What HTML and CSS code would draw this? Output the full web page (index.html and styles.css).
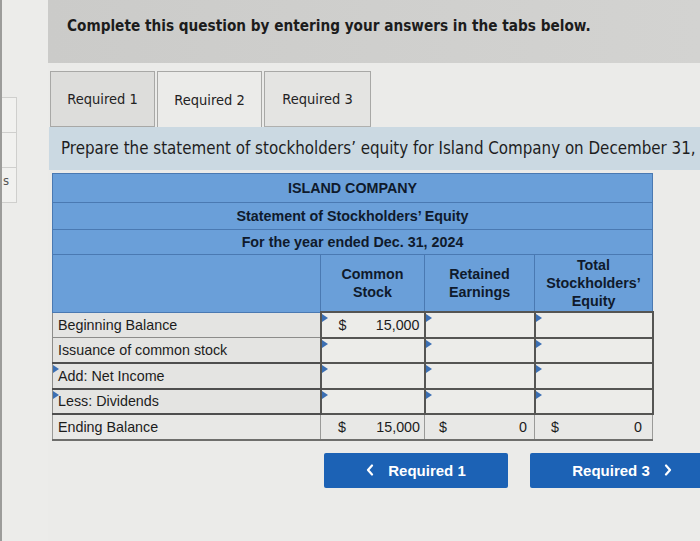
FILE: index.html
```html
<!DOCTYPE html>
<html lang="en">
<head>
<meta charset="utf-8">
<title>Statement of Stockholders' Equity</title>
<link rel="stylesheet" href="styles.css">
</head>
<body>
<div class="page">
  <aside class="side">
    <div class="side-box"></div>
    <div class="side-box"></div>
    <div class="side-box"><span class="side-text">s</span></div>
  </aside>
  <main class="main">
    <div class="banner">Complete this question by entering your answers in the tabs below.</div>
    <div class="tabs">
      <div class="tab tab-1">Required 1</div>
      <div class="tab tab-2 active">Required 2</div>
      <div class="tab tab-3">Required 3</div>
    </div>
    <div class="prompt">Prepare the statement of stockholders’ equity for Island Company on December 31, 2024.</div>
    <table class="sheet">
      <colgroup>
        <col class="c-label">
        <col class="c-cs">
        <col class="c-re">
        <col class="c-tot">
      </colgroup>
      <tr class="title t1"><td colspan="4">ISLAND COMPANY</td></tr>
      <tr class="title t2"><td colspan="4">Statement of Stockholders’ Equity</td></tr>
      <tr class="title t3"><td colspan="4">For the year ended Dec. 31, 2024</td></tr>
      <tr class="heads">
        <td></td>
        <td>Common<br>Stock</td>
        <td>Retained<br>Earnings</td>
        <td>Total<br>Stockholders’<br>Equity</td>
      </tr>
      <tr class="row">
        <td class="label">Beginning Balance</td>
        <td class="input flag"><div class="money"><span class="cur cur-cs">$</span><span class="amt">15,000</span></div></td>
        <td class="input flag"></td>
        <td class="input flag"></td>
      </tr>
      <tr class="row">
        <td class="label">Issuance of common stock</td>
        <td class="input flag"></td>
        <td class="input flag"></td>
        <td class="input flag"></td>
      </tr>
      <tr class="row">
        <td class="label pick flag">Add: Net Income</td>
        <td class="input flag"></td>
        <td class="input flag"></td>
        <td class="input flag"></td>
      </tr>
      <tr class="row">
        <td class="label pick flag">Less: Dividends</td>
        <td class="input flag"></td>
        <td class="input flag"></td>
        <td class="input flag"></td>
      </tr>
      <tr class="row total">
        <td class="label">Ending Balance</td>
        <td class="sum"><div class="money"><span class="cur cur-cs">$</span><span class="amt">15,000</span></div></td>
        <td class="sum"><div class="money"><span class="cur cur-re">$</span><span class="amt amt-re">0</span></div></td>
        <td class="sum"><div class="money"><span class="cur cur-tot">$</span><span class="amt amt-tot">0</span></div></td>
      </tr>
    </table>
    <div class="nav">
      <button class="nav-btn">
        <svg class="chev" width="8" height="12" viewBox="0 0 8 12"><polyline points="6,1.5 2,6 6,10.5" fill="none" stroke="#fff" stroke-width="2.2" stroke-linecap="round" stroke-linejoin="round"/></svg>
        <span>Required 1</span>
      </button>
      <button class="nav-btn">
        <span>Required 3</span>
        <svg class="chev" width="8" height="12" viewBox="0 0 8 12"><polyline points="2,1.5 6,6 2,10.5" fill="none" stroke="#fff" stroke-width="2.2" stroke-linecap="round" stroke-linejoin="round"/></svg>
      </button>
    </div>
  </main>
</div>
</body>
</html>
```

FILE: styles.css
```css
html, body {
  margin: 0;
  padding: 0;
  overflow: hidden;
}

body {
  width: 700px;
  height: 541px;
  background: #ebebe9;
  font-family: "Liberation Sans", Arial, sans-serif;
  color: #1a1a1a;
}

.page {
  display: flex;
  height: 541px;
}

.side {
  flex: none;
  width: 48px;
  border-left: 2px solid #9c9c9a;
  background: #ececea;
  display: flex;
  flex-direction: column;
  padding-top: 97px;
  box-sizing: border-box;
}

.side-box {
  width: 14px;
  height: 34px;
  background: #f1f1ef;
  border: 1px solid #cfcfcd;
  border-left: none;
  margin-bottom: -1px;
  position: relative;
}

.side-text {
  position: absolute;
  left: 1px;
  top: 5px;
  font-family: "DejaVu Sans Condensed", "DejaVu Sans", sans-serif;
  font-size: 13px;
  color: #555;
}

.main {
  flex: 1;
  min-width: 0;
  display: flex;
  flex-direction: column;
}

.banner {
  height: 63px;
  background: linear-gradient(90deg, #cbcbc9, #d3d3d1);
  box-sizing: border-box;
  padding: 16px 0 0 19px;
  font-family: "DejaVu Sans Condensed", "DejaVu Sans", sans-serif;
  font-weight: bold;
  font-size: 15.2px;
  line-height: 20px;
  color: #1c1c1c;
  white-space: nowrap;
}

.tabs {
  display: flex;
  gap: 2px;
  margin: 8px 0 0 2px;
  height: 56px;
}

.tab {
  flex: none;
  box-sizing: border-box;
  height: 56px;
  display: flex;
  align-items: center;
  justify-content: center;
  border: 1px solid #a8a8a6;
  border-bottom: none;
  font-family: "DejaVu Sans Condensed", "DejaVu Sans", sans-serif;
  font-size: 14.5px;
  color: #222;
}

.tab-1 {
  width: 105px;
  background: #dddddb;
  border-bottom: 1px solid #a8a8a6;
}

.tab-2 {
  width: 105px;
  background: #ebebe9;
}

.tab-3 {
  width: 107px;
  background: #e4e4e2;
  border-bottom: 1px solid #b0b0ae;
}

.prompt {
  margin-left: 1px;
  height: 43px;
  background: #cbd9e2;
  box-sizing: border-box;
  padding-left: 12px;
  line-height: 42px;
  font-family: "DejaVu Sans Condensed", "DejaVu Sans", sans-serif;
  font-size: 16.8px;
  color: #1e1e1e;
  white-space: nowrap;
  overflow: hidden;
}

.sheet {
  margin: 3px 0 0 4px;
  width: 600px;
  border-collapse: collapse;
  table-layout: fixed;
  font-size: 14.3px;
}

.c-label { width: 268px; }
.c-cs { width: 104px; }
.c-re { width: 110px; }
.c-tot { width: 118px; }

.sheet td {
  padding: 0;
}

.title td {
  background: #6a9fd9;
  border: 1px solid #4a79b2;
  text-align: center;
  font-weight: bold;
  color: #0f1a2c;
}

.t1 td { height: 28px; }
.t2 td { height: 26px; }
.t3 td { height: 24px; }

.heads td {
  height: 56px;
  background: #6a9fd9;
  border: 1px solid #4a79b2;
  text-align: center;
  font-weight: bold;
  line-height: 18px;
  color: #0f1a2c;
}

.row td {
  height: 23.5px;
}

.label {
  background: #e4e4e2;
  border: 1px solid #8c8c8a;
  padding-left: 5px !important;
  color: #1c1c1c;
  white-space: nowrap;
}

.pick {
  border-top: 2px solid #4e4e4e;
  border-bottom: 2px solid #4e4e4e;
}

.input {
  background: #ecece9;
  border: 2px solid #555553;
}

.flag {
  position: relative;
}

.flag::before {
  content: "";
  position: absolute;
  left: 0;
  top: 1px;
  width: 0;
  height: 0;
  border-left: 6px solid #3b6fb3;
  border-top: 4px solid transparent;
  border-bottom: 4px solid transparent;
}

.total td {
  background: #e8e8e6;
  border: 1px solid #9a9a98;
  border-bottom: 2px solid #6e6e6c;
}

.money {
  display: flex;
  justify-content: space-between;
  align-items: center;
  height: 100%;
  padding-right: 4px;
  color: #1c1c1c;
}

.cur-cs { padding-left: 17px; }
.cur-re { padding-left: 14px; }
.cur-tot { padding-left: 16px; }
.amt-re { padding-right: 3px; }
.amt-tot { padding-right: 6px; }

.nav {
  display: flex;
  gap: 22px;
  margin: 12px 0 0 276px;
}

.nav-btn {
  flex: none;
  width: 184px;
  height: 35px;
  border: none;
  border-radius: 2px;
  background: #1c62b5;
  color: #fff;
  font-family: "Liberation Sans", Arial, sans-serif;
  font-weight: bold;
  font-size: 15px;
  display: flex;
  align-items: center;
  justify-content: center;
  gap: 14px;
  padding: 0;
}

.chev {
  display: block;
}
```
